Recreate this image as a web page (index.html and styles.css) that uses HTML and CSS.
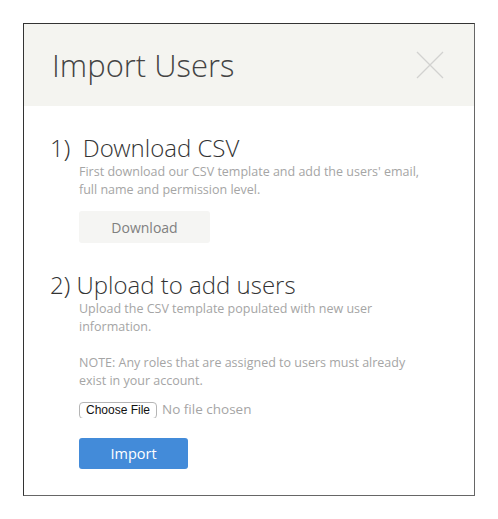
FILE: index.html
```html
<!DOCTYPE html>
<html>
    <head>
        <meta name="viewport" content="width=device-width, initial-scale=1">
        <link rel="stylesheet" href="styles.css">
    </head>
    <body>
        <div class="modal">
            <div class="modal-header">
                <h1 class="title">Import Users</h1>
                <button class="close-button" aria-label="Close">
                    <svg width="28" height="28" viewBox="0 0 28 28">
                        <path d="M1 1 L27 27 M27 1 L1 27" stroke="#d2d2d0" stroke-width="1.3" fill="none"/>
                    </svg>
                </button>
            </div>
            <div class="modal-body">
                <div class="step">
                    <h2>1)&nbsp; Download CSV</h2>
                    <p class="hint">First download our CSV template and add the users' email, full name and permission level.</p>
                    <button class="download-button">Download</button>
                </div>

                <div class="step">
                    <h2>2) Upload to add users</h2>
                    <p class="hint">Upload the CSV template populated with new user information.</p>
                    <p class="hint note">NOTE: Any roles that are assigned to users must already exist in your account.</p>
                    <input type="file" class="file-input" id="csv-file" accept=".csv">
                    <div>
                        <button class="import-button" id="import">Import</button>
                    </div>
                </div>
            </div>
        </div>
    </body>
</html>
```

FILE: styles.css
```css
body {
margin: 23px;
font-family: "Open Sans", sans-serif;
background: white;
}

.modal {
width: 450px;
border: 1px solid #666;
border-top-color: #333;
border-left-color: #333;
background-color: white;
}

.modal-header {
height: 82px;
background-color: #f4f4f0;
display: flex;
align-items: center;
justify-content: space-between;
padding: 0 30px 0 28px;
}

.title {
margin: 0;
font-family: "Open Sans Light", "Open Sans", sans-serif;
font-size: 31px;
font-weight: 300;
color: #444;
line-height: 36px;
}

.close-button {
border: none;
background: none;
padding: 0;
width: 28px;
height: 28px;
cursor: pointer;
}

.close-button svg {
display: block;
}

.modal-body {
padding: 28px 0 26px 26px;
}

.step + .step {
margin-top: 28px;
}

.step h2 {
margin: 0 0 1px 0;
font-family: "Open Sans Light", "Open Sans", sans-serif;
font-size: 24px;
font-weight: 300;
line-height: 28px;
color: #333;
}

.hint {
margin: 0 0 0 29px;
max-width: 345px;
font-size: 12.5px;
line-height: 18px;
color: #a5a5a5;
}

.note {
margin-top: 18px;
}

.download-button {
margin: 12px 0 0 29px;
width: 131px;
height: 32px;
border: none;
border-radius: 3px;
background-color: #f5f5f3;
color: #808080;
font-family: "Open Sans", sans-serif;
font-size: 14px;
cursor: pointer;
}

.file-input {
display: block;
margin: 11px 0 0 29px;
font-family: "Open Sans", sans-serif;
font-size: 13.5px;
color: #a5a5a5;
height: 17px;
line-height: 17px;
}

.file-input::file-selector-button {
font-family: "Liberation Sans", Arial, sans-serif;
font-size: 12px;
color: #111;
background: white;
border: 1px solid #b5b5b5;
border-radius: 4px;
height: 17px;
padding: 0 6px;
margin-right: 5px;
}

.import-button {
margin: 20px 0 0 29px;
width: 109px;
height: 31px;
border: none;
border-radius: 3px;
background-color: #438bd9;
color: white;
font-family: "Open Sans", sans-serif;
font-size: 14.5px;
cursor: pointer;
}

.import-button:hover {
background-color: #3a7dc6;
}
```
